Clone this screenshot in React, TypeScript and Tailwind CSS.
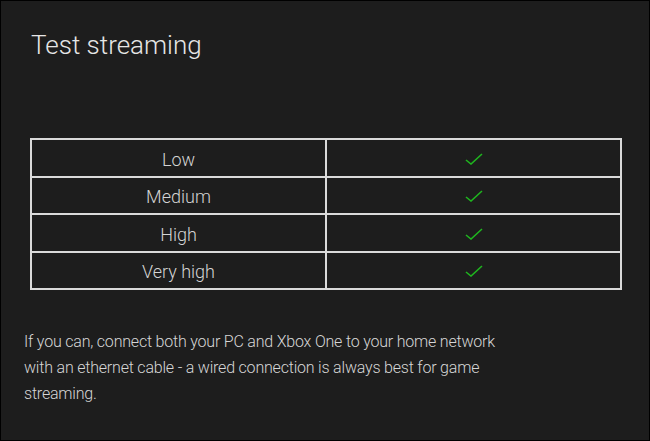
const levels = ["Low", "Medium", "High", "Very high"];

const Check = () => (
  <svg width="18" height="12" viewBox="0 0 18 12" fill="none">
    <path d="M1 7 L6 11 L17 1" stroke="#1fb51f" strokeWidth="1.6" strokeLinejoin="miter" />
  </svg>
);

export default function App() {
  return (
    <div
      className="w-[650px] h-[441px] bg-[#1d1d1d] border border-black text-[#d6d6d6] overflow-hidden"
      style={{ fontFamily: 'Roboto, "Open Sans", sans-serif' }}
    >
      <h1 className="ml-[30px] mt-[27px] text-[26px] font-light leading-[34px] text-[#e6e6e6]">
        Test streaming
      </h1>

      {/* quality results */}
      <table className="ml-[29px] mt-[76px] w-[592px] border-collapse">
        <tbody>
          {levels.map((l) => (
            <tr key={l} className="h-[37.5px]">
              <td className="w-[295px] border-2 border-[#dadada] pt-[3px] text-center text-[18px] font-light text-[#d4d4d4]">
                {l}
              </td>
              <td className="border-2 border-[#dadada]">
                <div className="flex justify-center pt-[2px]">
                  <Check />
                </div>
              </td>
            </tr>
          ))}
        </tbody>
      </table>

      <p className="ml-[23px] mt-[39px] w-[484px] text-[16px] tracking-[-0.2px] font-light leading-[26px] text-[#d6d6d6]">
        If you can, connect both your PC and Xbox One to your home network with an ethernet cable - a wired
        connection is always best for game streaming.
      </p>
    </div>
  );
}
